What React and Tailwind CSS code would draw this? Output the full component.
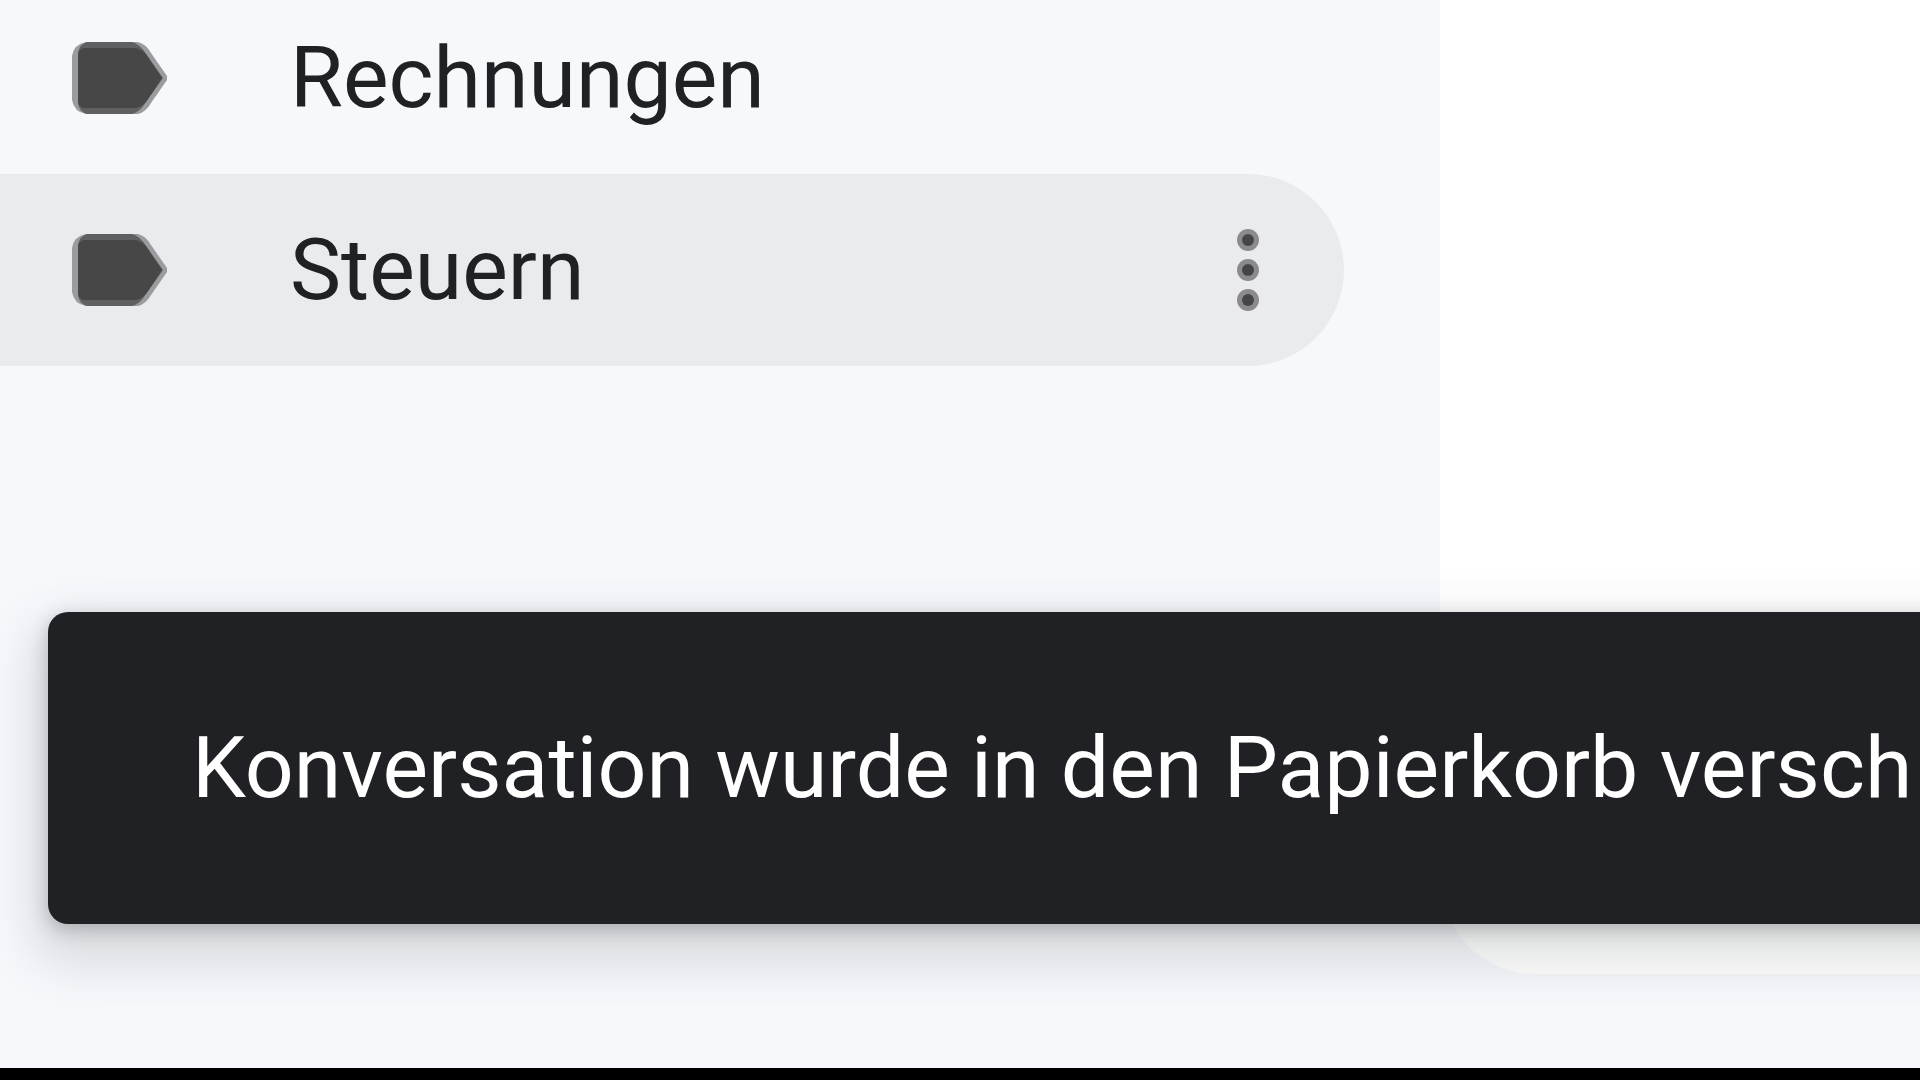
const labels = [
  { name: 'Rechnungen', active: false },
  { name: 'Steuern', active: true },
];

function LabelIcon() {
  return (
    <svg viewBox="0 0 120 120" className="h-[120px] w-[120px] shrink-0" aria-hidden="true">
      <path
        d="M26 24H78Q86 26 91 35L107 58V62L91 85Q86 94 78 96H26Q14 94 12 82V38Q14 26 26 24Z"
        fill="#9b9c9e"
      />
      <path d="M27 24H72Q80 26 86 36L103 60L86 84Q80 94 72 96H27Q20 94 18 86V34Q20 26 27 24Z" fill="#5f6062" />
      <path d="M23 30H76Q84 32 88 39L102 60L88 81Q84 88 76 90H23Q18 88 18 82V38Q18 32 23 30Z" fill="#474747" />
    </svg>
  );
}

function MoreIcon() {
  return (
    <svg viewBox="0 0 120 120" className="h-[120px] w-[120px]" aria-hidden="true">
      {[30, 60, 90].map((y) => (
        <g key={y}>
          <circle cx="60" cy={y} r="11" fill="#8b8b8d" />
          <circle cx="60" cy={y} r="6" fill="#444547" />
        </g>
      ))}
    </svg>
  );
}

function LabelRow({ label }) {
  return (
    <li
      className={`flex h-48 items-center rounded-r-full pr-9 ${label.active ? 'bg-[#e9ebee]' : ''}`}
    >
      <a href="#" className="flex flex-1 items-center gap-[110px] pl-[60px] text-[#202124]">
        <LabelIcon />
        <span>{label.name}</span>
      </a>
      {label.active && (
        <button type="button" aria-label="Menü">
          <MoreIcon />
        </button>
      )}
    </li>
  );
}

export default function App() {
  return (
    <div className="relative flex h-screen flex-col overflow-hidden bg-[#f6f8fc] font-['Roboto',sans-serif] text-[86px] leading-[96px]">
      <div className="flex min-h-0 flex-1">
        <nav className="w-3/4 pr-24">
          <ul className="-mt-[18px]">
            {labels.map((label) => (
              <LabelRow key={label.name} label={label} />
            ))}
          </ul>
        </nav>
        <main className="mb-[94px] flex-1 rounded-bl-[96px] bg-white" />
      </div>
      <div className="h-3 bg-black" />

      <div
        role="status"
        className="absolute bottom-[156px] left-12 -right-24 flex h-[312px] items-center rounded-[20px] bg-[#202124] pl-36 text-white shadow-[0_6px_18px_0_rgba(60,64,67,0.3),0_24px_48px_18px_rgba(60,64,67,0.15)]"
      >
        <span className="whitespace-nowrap">Konversation wurde in den Papierkorb versch</span>
      </div>
    </div>
  );
}
